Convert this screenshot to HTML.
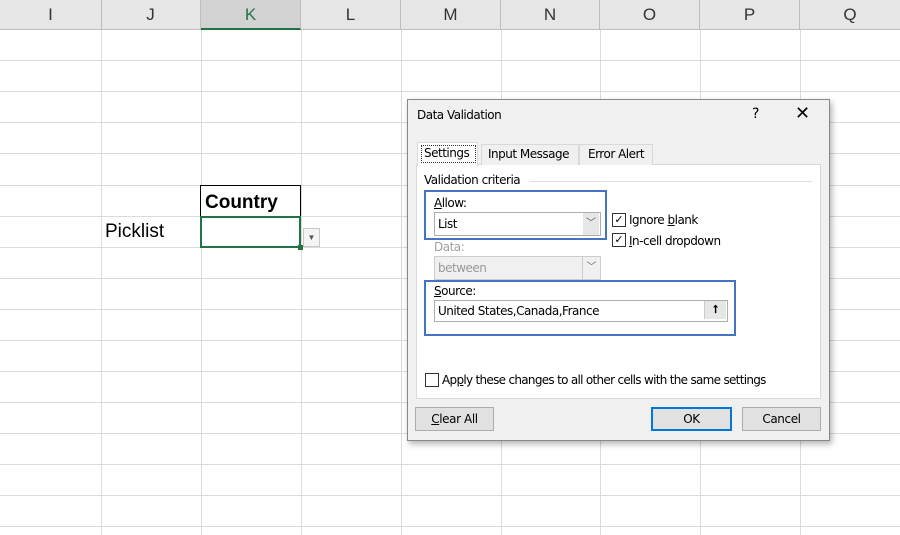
<!DOCTYPE html>
<html><head><style>
body{margin:0;width:900px;height:535px;overflow:hidden;background:#fff;font-family:"Liberation Sans",sans-serif;position:relative}
.hdr{position:absolute;top:0;left:0;width:900px;height:29px;background:#e6e6e6;border-bottom:1px solid #bdbdbd}
.hc{position:absolute;top:0;height:29px;line-height:30px;text-align:center;font-size:17px;color:#333;border-right:1px solid #bdbdbd}
.vl{position:absolute;top:30px;bottom:0;width:1px;background:#dadada}
.hl{position:absolute;left:0;width:900px;height:1px;background:#dadada}
.t{position:absolute;font-size:12px;color:#000;font-family:"DejaVu Sans",sans-serif;letter-spacing:-0.5px}
u{text-decoration:underline}
.btn{position:absolute;height:22px;background:#e1e1e1;border:1px solid #adadad;font-size:12px;text-align:center;line-height:22px;font-family:"DejaVu Sans",sans-serif;letter-spacing:-0.4px}
.cb{position:absolute;width:12px;height:12px;border:1px solid #333;background:#fff}
</style></head><body>
<div class="hdr"></div>
<div class="hc" style="left:0;width:101px">I</div>
<div class="hc" style="left:101px;width:99px">J</div>
<div class="hc" style="left:201px;width:99px;background:#d2d2d2;color:#217346;border-bottom:2px solid #217346;height:28px">K</div>
<div class="hc" style="left:301px;width:99px">L</div>
<div class="hc" style="left:401px;width:99px">M</div>
<div class="hc" style="left:501px;width:98px">N</div>
<div class="hc" style="left:600px;width:99px">O</div>
<div class="hc" style="left:700px;width:99px">P</div>
<div class="hc" style="left:800px;width:100px;border-right:none">Q</div>
<div class="vl" style="left:101px"></div><div class="vl" style="left:201px"></div><div class="vl" style="left:301px"></div><div class="vl" style="left:401px"></div><div class="vl" style="left:501px"></div><div class="vl" style="left:600px"></div><div class="vl" style="left:700px"></div><div class="vl" style="left:800px"></div>
<div class="hl" style="top:60px"></div><div class="hl" style="top:91px"></div><div class="hl" style="top:122px"></div><div class="hl" style="top:153px"></div><div class="hl" style="top:185px"></div><div class="hl" style="top:216px"></div><div class="hl" style="top:247px"></div><div class="hl" style="top:278px"></div><div class="hl" style="top:309px"></div><div class="hl" style="top:340px"></div><div class="hl" style="top:371px"></div><div class="hl" style="top:402px"></div><div class="hl" style="top:433px"></div><div class="hl" style="top:464px"></div><div class="hl" style="top:495px"></div><div class="hl" style="top:526px"></div>
<div style="position:absolute;left:200px;top:185px;width:101px;height:31px;border:1px solid #000;border-bottom:none;box-sizing:border-box;background:#fff;font-weight:bold;font-size:19px;line-height:34px;padding-left:4px">Country</div>
<div style="position:absolute;left:105px;top:221px;font-size:19px">Picklist</div>
<div style="position:absolute;left:200px;top:216px;width:101px;height:32px;border:2px solid #217346;box-sizing:border-box;background:#fff"></div>
<div style="position:absolute;left:298px;top:245px;width:5px;height:5px;background:#217346"></div>
<div style="position:absolute;left:303px;top:228px;width:15px;height:17px;border:1px solid #c8c8c8;background:#f4f4f4;font-size:8px;text-align:center;line-height:17px;color:#555">▼</div>
<!-- dialog -->
<div style="position:absolute;left:407px;top:99px;width:421px;height:340px;background:#f0f0f0;border:1px solid #888;box-shadow:2px 3px 6px rgba(0,0,0,.3)"></div>
<div class="t" style="left:417px;top:108px">Data Validation</div>
<div class="t" style="left:752px;top:106px;font-size:14px">?</div>
<div class="t" style="left:795px;top:103px;font-size:18px">✕</div>
<div style="position:absolute;left:416px;top:164px;width:403px;height:233px;background:#fff;border:1px solid #d9d9d9"></div>
<div style="position:absolute;left:417px;top:142px;width:59px;height:23px;background:#fff;border:1px solid #d9d9d9;border-bottom:none"></div>
<div style="position:absolute;left:421px;top:145px;width:53px;height:16px;border:1px dotted #333"></div>
<div class="t" style="left:424px;top:146px">Settings</div>
<div style="position:absolute;left:481px;top:144px;width:96px;height:20px;background:#f0f0f0;border:1px solid #d9d9d9;border-bottom:none"></div>
<div class="t" style="left:488px;top:147px">Input Message</div>
<div style="position:absolute;left:579px;top:144px;width:72px;height:20px;background:#f0f0f0;border:1px solid #d9d9d9;border-bottom:none"></div>
<div class="t" style="left:588px;top:147px">Error Alert</div>
<div class="t" style="left:424px;top:173px">Validation criteria</div>
<div style="position:absolute;left:530px;top:181px;width:282px;height:1px;background:#ddd"></div>
<div style="position:absolute;left:424px;top:190px;width:183px;height:50px;border:2px solid #4472c4;box-sizing:border-box"></div>
<div class="t" style="left:434px;top:196px"><u>A</u>llow:</div>
<div style="position:absolute;left:434px;top:212px;width:165px;height:22px;border:1px solid #adadad;background:#fff"></div>
<div class="t" style="left:438px;top:217px">List</div>
<div style="position:absolute;left:583px;top:213px;width:16px;height:22px;background:#e6e6e6;font-size:10px;text-align:center;line-height:22px;color:#555">﹀</div>
<div class="cb" style="left:612px;top:213px;font-size:11px;line-height:12px;text-align:center">✓</div>
<div class="t" style="left:629px;top:213px">Ignore <u>b</u>lank</div>
<div class="cb" style="left:612px;top:233px;font-size:11px;line-height:12px;text-align:center">✓</div>
<div class="t" style="left:629px;top:234px"><u>I</u>n-cell dropdown</div>
<div class="t" style="left:434px;top:240px;color:#a0a0a0">Data:</div>
<div style="position:absolute;left:434px;top:256px;width:165px;height:22px;border:1px solid #ccc;background:#f0f0f0"></div>
<div class="t" style="left:438px;top:261px;color:#999">between</div>
<div style="position:absolute;left:582px;top:257px;width:17px;height:22px;border-left:1px solid #ccc;font-size:10px;text-align:center;line-height:22px;color:#666">﹀</div>
<div style="position:absolute;left:424px;top:280px;width:312px;height:56px;border:2px solid #4472c4;box-sizing:border-box"></div>
<div class="t" style="left:434px;top:284px"><u>S</u>ource:</div>
<div style="position:absolute;left:434px;top:300px;width:292px;height:20px;border:1px solid #adadad;background:#fff"></div>
<div class="t" style="left:438px;top:304px">United States,Canada,France</div>
<div style="position:absolute;left:704px;top:301px;width:21px;height:18px;background:#e6e6e6;border-left:1px solid #ccc;font-size:11px;text-align:center;line-height:18px;font-weight:bold">⭡</div>
<div class="cb" style="left:425px;top:373px"></div>
<div class="t" style="left:442px;top:373px;letter-spacing:-0.7px">Ap<u>p</u>ly these changes to all other cells with the same settings</div>
<div class="btn" style="left:415px;top:407px;width:77px"><u>C</u>lear All</div>
<div class="btn" style="left:651px;top:407px;width:77px;border:2px solid #0078d7;height:20px;line-height:20px">OK</div>
<div class="btn" style="left:742px;top:407px;width:77px">Cancel</div>
</body></html>
